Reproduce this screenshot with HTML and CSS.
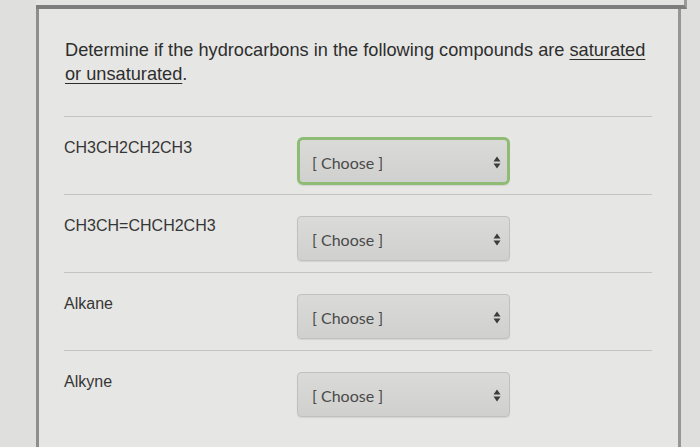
FILE: index.html
```html
<!DOCTYPE html>
<html lang="en">
<head>
    <meta charset="UTF-8">
    <title>Hydrocarbons</title>
    <link rel="stylesheet" href="styles.css">
</head>
<body>
    <div class="prev-card"></div>

    <div class="question-card">
        <p class="question-text">
            Determine if the hydrocarbons in the following compounds are <u>saturated</u> <u>or unsaturated</u>.
        </p>

        <div class="match-list">
            <div class="match-row">
                <div class="match-label">CH3CH2CH2CH3</div>
                <div class="select-box focused">
                    <span>[ Choose ]</span>
                    <svg class="arrows" width="8" height="13" viewBox="0 0 8 13">
                        <path d="M4 0.5 L7.5 5.5 L0.5 5.5 Z M4 12.5 L7.5 7.5 L0.5 7.5 Z" fill="#3c3c3c"/>
                    </svg>
                </div>
            </div>
            <div class="match-row">
                <div class="match-label">CH3CH=CHCH2CH3</div>
                <div class="select-box">
                    <span>[ Choose ]</span>
                    <svg class="arrows" width="8" height="13" viewBox="0 0 8 13">
                        <path d="M4 0.5 L7.5 5.5 L0.5 5.5 Z M4 12.5 L7.5 7.5 L0.5 7.5 Z" fill="#3c3c3c"/>
                    </svg>
                </div>
            </div>
            <div class="match-row">
                <div class="match-label">Alkane</div>
                <div class="select-box">
                    <span>[ Choose ]</span>
                    <svg class="arrows" width="8" height="13" viewBox="0 0 8 13">
                        <path d="M4 0.5 L7.5 5.5 L0.5 5.5 Z M4 12.5 L7.5 7.5 L0.5 7.5 Z" fill="#3c3c3c"/>
                    </svg>
                </div>
            </div>
            <div class="match-row">
                <div class="match-label">Alkyne</div>
                <div class="select-box">
                    <span>[ Choose ]</span>
                    <svg class="arrows" width="8" height="13" viewBox="0 0 8 13">
                        <path d="M4 0.5 L7.5 5.5 L0.5 5.5 Z M4 12.5 L7.5 7.5 L0.5 7.5 Z" fill="#3c3c3c"/>
                    </svg>
                </div>
            </div>
        </div>
    </div>
</body>
</html>
```

FILE: styles.css
```css
body {
    margin: 0;
    background-color: #dfdfdd;
    font-family: 'Liberation Sans', Arial, sans-serif;
    color: #333;
}

/* bottom edge of the previous question */
.prev-card {
    height: 5px;
    margin-left: 36px;
    width: 648px;
    border-right: 3px solid #9a9a9a;
    background-color: #e3e3e1;
    border-bottom: 4px solid #7d7d7d;
}

.question-card {
    margin-left: 36px;
    width: 639px;
    height: 460px;
    border-left: 3px solid #8e8e8e;
    border-right: 3px solid #969696;
    background-color: #e6e6e4;
}

.question-text {
    margin: 0;
    padding: 29px 0 0 26px;
    width: 592px;
    font-size: 18.2px;
    line-height: 24px;
    color: #2e2e2e;
}

.question-text u {
    text-decoration-thickness: 1px;
    text-underline-offset: 3px;
}

.match-list {
    margin: 30px 26px 0 25px;
}

.match-row {
    display: grid;
    grid-template-columns: 233px 213px;
    align-items: start;
    height: 78px;
    box-sizing: border-box;
    padding-top: 21px;
    border-top: 1px solid #c4c4c2;
}

.match-label {
    font-size: 16px;
    line-height: 20px;
    color: #363636;
}

.select-box {
    height: 45px;
    box-sizing: border-box;
    display: flex;
    align-items: center;
    justify-content: space-between;
    padding: 2px 8px 0 14px;
    border: 1px solid #c0c0be;
    border-radius: 4px;
    background: linear-gradient(#dadad8, #d0d0ce);
    box-shadow: 0 1px 1px rgba(0, 0, 0, 0.08);
    font-family: Lato, 'Open Sans', sans-serif;
    font-size: 16px;
    color: #4a4a4a;
}

.select-box.focused {
    border: 3px solid #8fbc74;
    border-radius: 6px;
    height: 48px;
    margin-top: -1px;
    padding-left: 12px;
    padding-right: 6px;
}

.arrows {
    display: block;
}
```
